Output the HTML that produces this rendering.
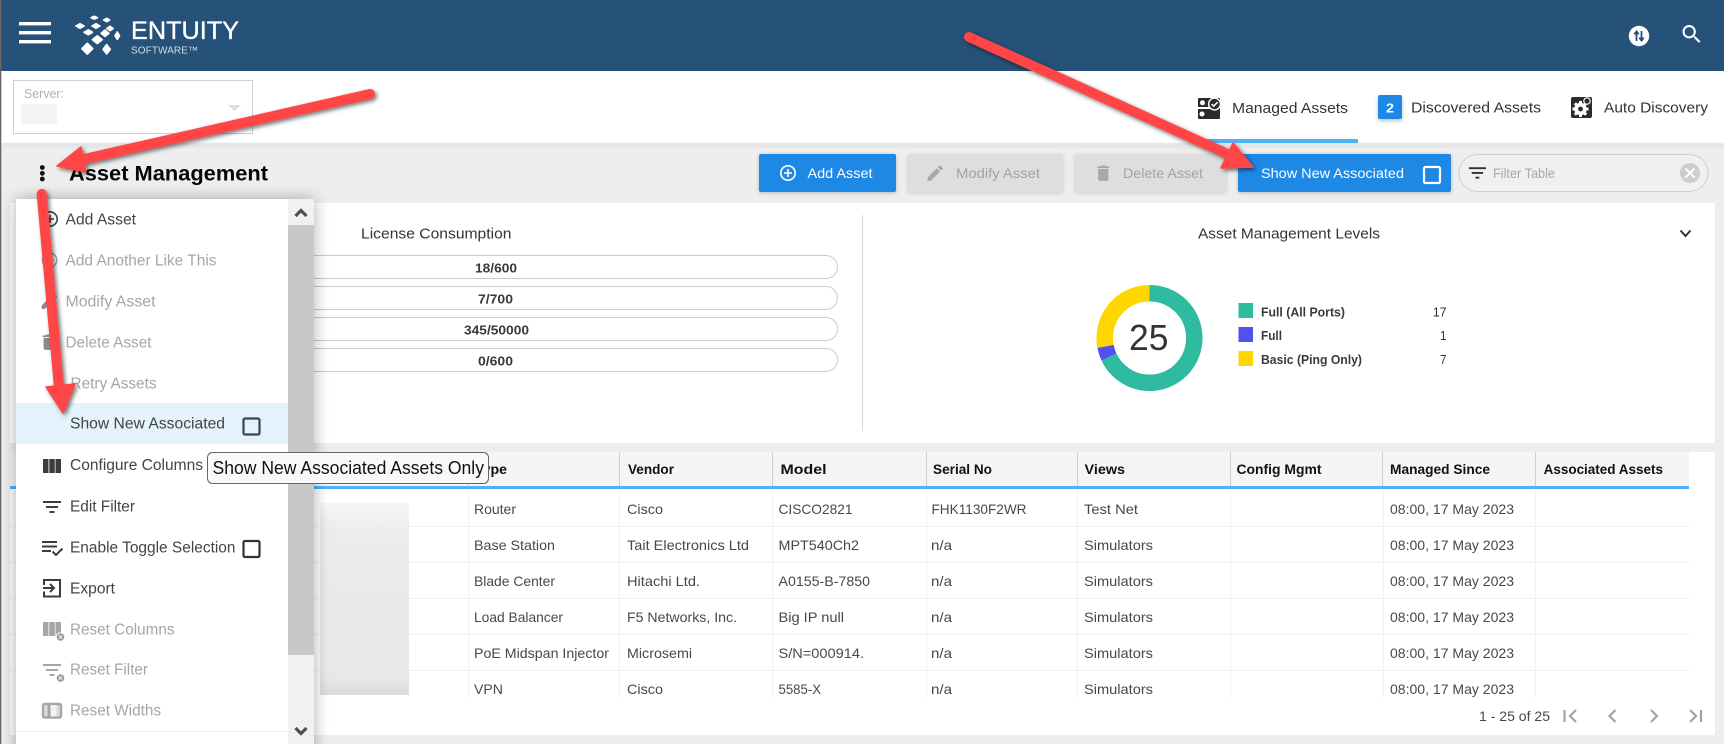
<!DOCTYPE html>
<html><head><meta charset="utf-8"><title>Asset Management</title>
<style>
html,body{margin:0;padding:0;background:#eee;width:1724px;height:744px;overflow:hidden}
svg{display:block}
text{font-family:"Liberation Sans",sans-serif;white-space:pre}
.m{font-size:15.5px;fill:#444}
.g{font-size:15.5px;fill:#a6a6a6}
.h{font-size:14px;font-weight:bold;fill:#111}
.c{font-size:14px;fill:#484848}
.t{font-size:15px;fill:#333}
.b{font-size:14px;fill:#fff}
.d{font-size:14px;fill:#a3a3a3}
.l{font-size:13px;font-weight:bold;fill:#3a3a3a}
.p{font-size:13px;font-weight:bold;fill:#3a3a3a}
</style></head><body>
<svg xmlns="http://www.w3.org/2000/svg" width="1724" height="744" viewBox="0 0 1724 744">
<defs>
<filter id="s8" x="-20%" y="-20%" width="140%" height="140%"><feGaussianBlur stdDeviation="8"/></filter>
<filter id="s2" x="-20%" y="-50%" width="140%" height="200%"><feGaussianBlur stdDeviation="2"/></filter>
<filter id="as" x="-20%" y="-20%" width="140%" height="140%"><feDropShadow dx="2" dy="2" stdDeviation="2" flood-color="#000" flood-opacity=".55"/></filter>
<linearGradient id="blk" x1="0" y1="0" x2="0" y2="1"><stop offset="0" stop-color="#f7f7f7"/><stop offset=".14" stop-color="#ececec"/><stop offset=".5" stop-color="#e9e9e9"/><stop offset=".9" stop-color="#e8e8e8"/><stop offset="1" stop-color="#dcdcdc"/></linearGradient>
</defs>
<rect width="1724" height="744" fill="#eeeeee"/>
<rect y="71" width="1724" height="72" fill="#fff"/>
<rect y="143" width="1724" height="4" fill="#000" opacity=".05" filter="url(#s2)"/>

<!-- Header -->
<rect width="1724" height="71" fill="#265178"/>
<g fill="#fff">
<rect x="19" y="22" width="32" height="3.4"/><rect x="19" y="31" width="32" height="3.4"/><rect x="19" y="40" width="32" height="3.4"/>
</g>
<g fill="#fff" stroke="#fff" stroke-width="1.5" stroke-linejoin="round">
<polygon points="81.8,48.7 87.3,43.2 92.8,48.7 87.3,54.2"/>
<polygon points="103,49.3 106.7,44.5 110.4,49.3 106.7,54.1"/>
<polygon points="92.3,39.7 97.3,35.7 102.3,39.7 97.3,43.7"/>
<polygon points="84,32.3 88.3,29.8 92.6,32.3 88.3,34.8"/>
<polygon points="101,33.3 105,30 109,33.3 105,36.6"/>
<polygon points="92,26 96,23.7 100,26 96,28.3"/>
<polygon points="75.8,26 80,23.7 84.2,26 80,28.3"/>
<polygon points="106.7,28.5 110,26.2 113.3,28.5 110,30.8"/>
<polygon points="115,35.7 117.3,31.9 119.6,35.7 117.3,39.5"/>
<polygon points="91,17.7 94.3,16.2 97.6,17.7 94.3,19.2"/>
<polygon points="103.6,20 106.7,18.2 109.8,20 106.7,21.8"/>
</g>
<text x="131" y="39" font-size="25" fill="#fff" stroke="#fff" stroke-width=".35" textLength="108" lengthAdjust="spacingAndGlyphs">ENTUITY</text>
<text x="131" y="53.500" font-size="10" fill="#d5dde5" textLength="67">SOFTWARE™</text>
<circle cx="1639" cy="36" r="10.2" fill="#fff"/>
<path d="M1636.500 41v-9M1634.300 34.300l2.200-2.800 2.200 2.800M1641.500 31v9M1639.300 37.700l2.200 2.800 2.200-2.800" stroke="#265178" stroke-width="1.800" fill="none"/>
<path transform="translate(1679.500 22) scale(1.02)" fill="#fff" d="M15.5 14h-.79l-.28-.27C15.41 12.59 16 11.11 16 9.5 16 5.91 13.09 3 9.5 3S3 5.91 3 9.5 5.91 16 9.5 16c1.61 0 3.09-.59 4.23-1.57l.27.28v.79l5 4.99L20.49 19l-4.99-5zm-6 0C7.01 14 5 11.99 5 9.5S7.01 5 9.5 5 14 7.01 14 9.5 11.99 14 9.5 14z"/>

<!-- Server -->
<rect x="13.5" y="80.5" width="239" height="53" fill="#fff" stroke="#cfcfcf"/>
<text x="24" y="98" font-size="13" fill="#b0b0b0" textLength="40" lengthAdjust="spacingAndGlyphs">Server:</text>
<rect x="21" y="104" width="36" height="20" fill="#f3f3f3"/>
<polygon points="228,105 241,105 234.5,111" fill="#dedede"/>

<!-- Tabs -->
<rect x="1198" y="98" width="22" height="21" rx="1" fill="#2b2b2b"/>
<rect x="1198" y="107" width="13" height="2" fill="#fff"/>
<circle cx="1202.5" cy="102.8" r="2.5" fill="#fff"/><circle cx="1202" cy="114" r="2.5" fill="#fff"/>
<circle cx="1214.5" cy="104" r="6.6" fill="#fff"/><circle cx="1214.5" cy="104" r="5.2" fill="#2b2b2b"/>
<path d="M1211.6 104l2.1 2.2 3.9-4" stroke="#fff" stroke-width="1.5" fill="none"/>
<text x="1232" y="113" class="t" textLength="116" lengthAdjust="spacingAndGlyphs">Managed Assets</text>
<rect x="1198" y="139" width="160" height="4" fill="#4db2f7"/>
<rect x="1378" y="97" width="24" height="24" rx="2" fill="#000" opacity=".25" filter="url(#s2)"/>
<rect x="1378" y="95" width="24" height="24" rx="2" fill="#1e88e5"/>
<text x="1386" y="112.5" font-size="13" font-weight="bold" fill="#fff" textLength="8" lengthAdjust="spacingAndGlyphs">2</text>
<text x="1411" y="112.500" class="t" textLength="130" lengthAdjust="spacingAndGlyphs">Discovered Assets</text>
<rect x="1571" y="97" width="21" height="21" rx="2" fill="#2b2b2b"/>
<g transform="translate(1580.5 109)"><circle r="6.2" fill="#fff"/><path d="M-1.5-8h3v16h-3zM-8-1.5h16v3h-16z" fill="#fff"/><path d="M-1.5-8h3v16h-3z" fill="#fff" transform="rotate(45)"/><path d="M-1.5-8h3v16h-3z" fill="#fff" transform="rotate(-45)"/><circle r="2.4" fill="#2b2b2b"/></g>
<circle cx="1587" cy="101" r="3.2" fill="#2b2b2b" stroke="#fff" stroke-width="1.2"/>
<text x="1604" y="112.500" class="t" textLength="104" lengthAdjust="spacingAndGlyphs">Auto Discovery</text>

<!-- Toolbar -->
<circle cx="42.3" cy="167.500" r="2.400" fill="#111"/><circle cx="42.3" cy="173.300" r="2.400" fill="#111"/><circle cx="42.3" cy="179" r="2.400" fill="#111"/>
<text x="69" y="180.500" font-size="21.5" font-weight="bold" fill="#050505" textLength="199" lengthAdjust="spacingAndGlyphs">Asset Management</text>
<rect x="759" y="155" width="137" height="38" rx="2" fill="#000" opacity=".22" filter="url(#s2)"/>
<rect x="759" y="154" width="137" height="38" rx="2" fill="#1e88e5"/>
<rect x="908" y="155" width="155" height="38" rx="2" fill="#000" opacity=".15" filter="url(#s2)"/>
<rect x="908" y="154" width="155" height="38" rx="2" fill="#dedede"/>
<rect x="1075" y="155" width="151.500" height="38" rx="2" fill="#000" opacity=".15" filter="url(#s2)"/>
<rect x="1075" y="154" width="151.500" height="38" rx="2" fill="#dedede"/>
<rect x="1238" y="155" width="213" height="38" rx="2" fill="#000" opacity=".22" filter="url(#s2)"/>
<rect x="1238" y="154" width="213" height="38" rx="2" fill="#1e88e5"/>
<path transform="translate(778.4 163.400) scale(.8)" fill="#fff" d="M13 7h-2v4H7v2h4v4h2v-4h4v-2h-4V7zm-1-5C6.48 2 2 6.48 2 12s4.48 10 10 10 10-4.48 10-10S17.52 2 12 2zm0 18c-4.41 0-8-3.59-8-8s3.59-8 8-8 8 3.59 8 8-3.59 8-8 8z"/>
<text x="807.500" y="178" class="b" textLength="65" lengthAdjust="spacingAndGlyphs">Add Asset</text>
<path transform="translate(925 163) scale(.85)" fill="#a8a8a8" d="M3 17.25V21h3.75L17.81 9.94l-3.75-3.75L3 17.25zM20.71 7.04c.39-.39.39-1.02 0-1.41l-2.34-2.34c-.39-.39-1.02-.39-1.41 0l-1.83 1.83 3.75 3.75 1.83-1.83z"/>
<text x="956" y="178" class="d" textLength="84" lengthAdjust="spacingAndGlyphs">Modify Asset</text>
<path transform="translate(1093 163) scale(.85)" fill="#a8a8a8" d="M6 19c0 1.1.9 2 2 2h8c1.1 0 2-.9 2-2V7H6v12zM19 4h-3.500l-1-1h-5l-1 1H5v2h14V4z"/>
<text x="1123" y="178" class="d" textLength="80" lengthAdjust="spacingAndGlyphs">Delete Asset</text>
<text x="1261" y="178" class="b" textLength="143" lengthAdjust="spacingAndGlyphs">Show New Associated</text>
<rect x="1424" y="167" width="16" height="16" rx="1.500" fill="none" stroke="#fff" stroke-width="2.200"/>
<rect x="1459" y="154.500" width="249" height="37" rx="18.500" fill="#f0f0f0" stroke="#cfcfcf"/>
<path transform="translate(1466 161.500) scale(.95)" fill="#333" d="M10 18h4v-2h-4v2zM3 6v2h18V6H3zm3 7h12v-2H6v2z"/>
<text x="1493" y="178" font-size="14" fill="#a8a8a8" textLength="62" lengthAdjust="spacingAndGlyphs">Filter Table</text>
<circle cx="1690" cy="173" r="10" fill="#cdcdcd"/>
<path d="M1685.500 168.500l9 9M1694.500 168.500l-9 9" stroke="#fff" stroke-width="2"/>

<!-- Top panel -->
<rect x="10" y="203" width="1705" height="240" fill="#fff"/>
<text x="361" y="238.500" class="t" textLength="150.500" lengthAdjust="spacingAndGlyphs">License Consumption</text>
<g fill="#fff" stroke="#cbcbcb">
<rect x="160.500" y="255.500" width="677" height="23" rx="11.500"/>
<rect x="160.500" y="286.500" width="677" height="23" rx="11.500"/>
<rect x="160.500" y="317.500" width="677" height="23" rx="11.500"/>
<rect x="160.500" y="348.500" width="677" height="23" rx="11.500"/>
</g>
<text x="475" y="272.500" class="p" textLength="42" lengthAdjust="spacingAndGlyphs">18/600</text>
<text x="478" y="303.500" class="p" textLength="35" lengthAdjust="spacingAndGlyphs">7/700</text>
<text x="464" y="334.500" class="p" textLength="65" lengthAdjust="spacingAndGlyphs">345/50000</text>
<text x="478" y="365.500" class="p" textLength="35" lengthAdjust="spacingAndGlyphs">0/600</text>
<rect x="862" y="215" width="1" height="216" fill="#d6d6d6"/>
<text x="1198" y="238.500" class="t" textLength="182" lengthAdjust="spacingAndGlyphs">Asset Management Levels</text>
<path d="M1680.500 230.500l5 5.500 5-5.500" fill="none" stroke="#333" stroke-width="2"/>
<g fill="none" stroke-width="16.500" transform="rotate(-90 1149.500 338)">
<circle cx="1149.500" cy="338" r="44.800" stroke="#2fbb9f" pathLength="360" stroke-dasharray="244.800 360"/>
<circle cx="1149.500" cy="338" r="44.800" stroke="#5450f0" pathLength="360" stroke-dasharray="14.400 360" stroke-dashoffset="-244.800"/>
<circle cx="1149.500" cy="338" r="44.800" stroke="#ffd600" pathLength="360" stroke-dasharray="100.800 360" stroke-dashoffset="-259.200"/>
</g>
<text x="1129" y="350" font-size="36" fill="#333" textLength="39.500" lengthAdjust="spacingAndGlyphs">25</text>
<rect x="1238.500" y="303" width="14.500" height="15" fill="#2fbb9f"/>
<rect x="1238.500" y="327" width="14.500" height="15" fill="#5450f0"/>
<rect x="1238.500" y="351" width="14.500" height="15" fill="#ffd600"/>
<text x="1261" y="316.500" class="l" textLength="84" lengthAdjust="spacingAndGlyphs">Full (All Ports)</text>
<text x="1261" y="340" class="l" textLength="21" lengthAdjust="spacingAndGlyphs">Full</text>
<text x="1261" y="364" class="l" textLength="101" lengthAdjust="spacingAndGlyphs">Basic (Ping Only)</text>
<text x="1432.700" y="316.500" font-size="13" fill="#333" textLength="14" lengthAdjust="spacingAndGlyphs">17</text>
<text x="1440" y="340" font-size="13" fill="#333" textLength="6.500" lengthAdjust="spacingAndGlyphs">1</text>
<text x="1440" y="364" font-size="13" fill="#333" textLength="6.500" lengthAdjust="spacingAndGlyphs">7</text>

<!-- Table -->
<rect x="10" y="452" width="1705" height="283" fill="#fff"/>
<rect x="10" y="452" width="1679" height="34" fill="#f5f5f5"/>
<rect x="10" y="486" width="1679" height="3" fill="#4db2f7"/>
<g fill="#cfcfcf">
<rect x="467" y="452" width="1" height="34"/><rect x="619" y="452" width="1" height="34"/><rect x="772" y="452" width="1" height="34"/><rect x="926" y="452" width="1" height="34"/><rect x="1077" y="452" width="1" height="34"/><rect x="1230" y="452" width="1" height="34"/><rect x="1382" y="452" width="1" height="34"/><rect x="1535" y="452" width="1" height="34"/>
</g>
<g fill="#f1f1f1">
<rect x="468" y="491" width="1" height="206"/><rect x="619" y="491" width="1" height="206"/><rect x="772" y="491" width="1" height="206"/><rect x="926" y="491" width="1" height="206"/><rect x="1077" y="491" width="1" height="206"/><rect x="1230" y="491" width="1" height="206"/><rect x="1383" y="491" width="1" height="206"/><rect x="1535" y="491" width="1" height="206"/>
<rect x="10" y="526" width="1679" height="1"/><rect x="10" y="562" width="1679" height="1"/><rect x="10" y="598" width="1679" height="1"/><rect x="10" y="634" width="1679" height="1"/><rect x="10" y="670" width="1679" height="1"/>
</g>
<rect x="320" y="503" width="89" height="192" fill="url(#blk)"/>
<text x="475" y="474" class="h" textLength="32" lengthAdjust="spacingAndGlyphs">Type</text>
<text x="628" y="474" class="h" textLength="46" lengthAdjust="spacingAndGlyphs">Vendor</text>
<text x="780.500" y="474" class="h" textLength="46" lengthAdjust="spacingAndGlyphs">Model</text>
<text x="933" y="474" class="h" textLength="59" lengthAdjust="spacingAndGlyphs">Serial No</text>
<text x="1084.500" y="474" class="h" textLength="40.500" lengthAdjust="spacingAndGlyphs">Views</text>
<text x="1236.500" y="474" class="h" textLength="85" lengthAdjust="spacingAndGlyphs">Config Mgmt</text>
<text x="1390" y="474" class="h" textLength="100" lengthAdjust="spacingAndGlyphs">Managed Since</text>
<text x="1543.600" y="474" class="h" textLength="119.400" lengthAdjust="spacingAndGlyphs">Associated Assets</text>

<text x="474" y="514" class="c" textLength="42" lengthAdjust="spacingAndGlyphs">Router</text>
<text x="627" y="514" class="c" textLength="36" lengthAdjust="spacingAndGlyphs">Cisco</text>
<text x="778.500" y="514" class="c" textLength="74" lengthAdjust="spacingAndGlyphs">CISCO2821</text>
<text x="931.500" y="514" class="c" textLength="95" lengthAdjust="spacingAndGlyphs">FHK1130F2WR</text>
<text x="1084" y="514" class="c" textLength="54" lengthAdjust="spacingAndGlyphs">Test Net</text>
<text x="1390" y="514" class="c" textLength="124" lengthAdjust="spacingAndGlyphs">08:00, 17 May 2023</text>

<text x="474" y="550" class="c" textLength="81" lengthAdjust="spacingAndGlyphs">Base Station</text>
<text x="627" y="550" class="c" textLength="122" lengthAdjust="spacingAndGlyphs">Tait Electronics Ltd</text>
<text x="778.500" y="550" class="c" textLength="80.500" lengthAdjust="spacingAndGlyphs">MPT540Ch2</text>
<text x="931" y="550" class="c" textLength="21" lengthAdjust="spacingAndGlyphs">n/a</text>
<text x="1084" y="550" class="c" textLength="69" lengthAdjust="spacingAndGlyphs">Simulators</text>
<text x="1390" y="550" class="c" textLength="124" lengthAdjust="spacingAndGlyphs">08:00, 17 May 2023</text>

<text x="474" y="586" class="c" textLength="81" lengthAdjust="spacingAndGlyphs">Blade Center</text>
<text x="627" y="586" class="c" textLength="73" lengthAdjust="spacingAndGlyphs">Hitachi Ltd.</text>
<text x="778.500" y="586" class="c" textLength="91.500" lengthAdjust="spacingAndGlyphs">A0155-B-7850</text>
<text x="931" y="586" class="c" textLength="21" lengthAdjust="spacingAndGlyphs">n/a</text>
<text x="1084" y="586" class="c" textLength="69" lengthAdjust="spacingAndGlyphs">Simulators</text>
<text x="1390" y="586" class="c" textLength="124" lengthAdjust="spacingAndGlyphs">08:00, 17 May 2023</text>

<text x="474" y="622" class="c" textLength="89" lengthAdjust="spacingAndGlyphs">Load Balancer</text>
<text x="627" y="622" class="c" textLength="110" lengthAdjust="spacingAndGlyphs">F5 Networks, Inc.</text>
<text x="778.500" y="622" class="c" textLength="65.500" lengthAdjust="spacingAndGlyphs">Big IP null</text>
<text x="931" y="622" class="c" textLength="21" lengthAdjust="spacingAndGlyphs">n/a</text>
<text x="1084" y="622" class="c" textLength="69" lengthAdjust="spacingAndGlyphs">Simulators</text>
<text x="1390" y="622" class="c" textLength="124" lengthAdjust="spacingAndGlyphs">08:00, 17 May 2023</text>

<text x="474" y="658" class="c" textLength="135" lengthAdjust="spacingAndGlyphs">PoE Midspan Injector</text>
<text x="627" y="658" class="c" textLength="65" lengthAdjust="spacingAndGlyphs">Microsemi</text>
<text x="778.500" y="658" class="c" textLength="85.500" lengthAdjust="spacingAndGlyphs">S/N=000914.</text>
<text x="931" y="658" class="c" textLength="21" lengthAdjust="spacingAndGlyphs">n/a</text>
<text x="1084" y="658" class="c" textLength="69" lengthAdjust="spacingAndGlyphs">Simulators</text>
<text x="1390" y="658" class="c" textLength="124" lengthAdjust="spacingAndGlyphs">08:00, 17 May 2023</text>

<text x="474" y="694" class="c" textLength="29" lengthAdjust="spacingAndGlyphs">VPN</text>
<text x="627" y="694" class="c" textLength="36" lengthAdjust="spacingAndGlyphs">Cisco</text>
<text x="778.500" y="694" class="c" textLength="42.500" lengthAdjust="spacingAndGlyphs">5585-X</text>
<text x="931" y="694" class="c" textLength="21" lengthAdjust="spacingAndGlyphs">n/a</text>
<text x="1084" y="694" class="c" textLength="69" lengthAdjust="spacingAndGlyphs">Simulators</text>
<text x="1390" y="694" class="c" textLength="124" lengthAdjust="spacingAndGlyphs">08:00, 17 May 2023</text>
<rect x="410" y="697" width="1290" height="38" fill="#fff"/>

<text x="1479" y="721" font-size="14" fill="#484848" textLength="71" lengthAdjust="spacingAndGlyphs">1 - 25 of 25</text>
<g fill="none" stroke="#a3a3a3" stroke-width="2.200">
<path d="M1564.500 710v12M1576 710l-6 6 6 6"/>
<path d="M1615.500 710l-6 6 6 6"/>
<path d="M1651 710l6 6-6 6"/>
<path d="M1690 710l6 6-6 6M1701 710v12"/>
</g>

<!-- Menu -->
<rect x="16" y="199" width="298" height="560" fill="#000" opacity=".32" filter="url(#s8)"/>
<rect x="16" y="199" width="272" height="545" fill="#fff"/>
<rect x="288" y="199" width="26" height="545" fill="#f1f1f1"/>
<rect x="288" y="225" width="26" height="430" fill="#c8c8c8"/>
<path d="M295.500 216l5.500-5.500 5.500 5.500" fill="none" stroke="#505050" stroke-width="3.200"/>
<path d="M295.500 728l5.500 5.500 5.500-5.500" fill="none" stroke="#505050" stroke-width="3.200"/>
<rect x="16" y="403" width="272" height="41" fill="#e3f2fb"/>
<rect x="16" y="731" width="272" height="1" fill="#ececec"/>

<path transform="translate(40.400 209.400) scale(.8)" fill="#444" d="M13 7h-2v4H7v2h4v4h2v-4h4v-2h-4V7zm-1-5C6.48 2 2 6.48 2 12s4.48 10 10 10 10-4.48 10-10S17.52 2 12 2zm0 18c-4.41 0-8-3.59-8-8s3.59-8 8-8 8 3.59 8 8-3.59 8-8 8z"/>
<text x="65.500" y="224.500" class="m" textLength="70.500" lengthAdjust="spacingAndGlyphs">Add Asset</text>
<path transform="translate(40 250.500) scale(.8)" fill="#a6a6a6" d="M13 7h-2v4H7v2h4v4h2v-4h4v-2h-4V7zm-1-5C6.48 2 2 6.48 2 12s4.48 10 10 10 10-4.48 10-10S17.52 2 12 2zm0 18c-4.41 0-8-3.59-8-8s3.59-8 8-8 8 3.59 8 8-3.59 8-8 8z"/>
<text x="65.500" y="265.500" class="g" textLength="151" lengthAdjust="spacingAndGlyphs">Add Another Like This</text>
<path transform="translate(39 291) scale(.85)" fill="#8a8a8a" d="M3 17.25V21h3.750L17.810 9.940l-3.750-3.750L3 17.250zM20.710 7.040c.39-.39.39-1.020 0-1.410l-2.340-2.340c-.39-.39-1.020-.39-1.410 0l-1.830 1.830 3.750 3.750 1.830-1.830z"/>
<text x="65.500" y="306.500" class="g" textLength="90" lengthAdjust="spacingAndGlyphs">Modify Asset</text>
<path transform="translate(38.500 332) scale(.85)" fill="#8a8a8a" d="M6 19c0 1.100.9 2 2 2h8c1.100 0 2-.9 2-2V7H6v12zM19 4h-3.500l-1-1h-5l-1 1H5v2h14V4z"/>
<text x="65.500" y="347.500" class="g" textLength="86" lengthAdjust="spacingAndGlyphs">Delete Asset</text>
<text x="70.500" y="388.500" class="g" textLength="86" lengthAdjust="spacingAndGlyphs">Retry Assets</text>
<text x="70" y="428.500" class="m" textLength="155" lengthAdjust="spacingAndGlyphs">Show New Associated</text>
<rect x="243.500" y="418.500" width="16" height="16" rx="1.500" fill="none" stroke="#37474f" stroke-width="2.200"/>

<g fill="#3c3c3c"><rect x="43" y="459" width="5.500" height="14"/><rect x="49.300" y="459" width="5.500" height="14"/><rect x="55.500" y="459" width="5.500" height="14"/></g>
<text x="70" y="470" class="m" textLength="133" lengthAdjust="spacingAndGlyphs">Configure Columns</text>
<g fill="#3c3c3c"><rect x="43" y="501" width="18" height="2"/><rect x="46" y="506" width="12" height="2"/><rect x="49.500" y="511" width="5" height="2"/></g>
<text x="70" y="511.500" class="m" textLength="65" lengthAdjust="spacingAndGlyphs">Edit Filter</text>
<g fill="#3c3c3c"><rect x="42" y="541" width="15" height="2"/><rect x="42" y="545.500" width="15" height="2"/><rect x="42" y="550" width="9" height="2"/></g>
<path d="M52.500 551.500l3.500 3.500 6.500-6.500" fill="none" stroke="#3c3c3c" stroke-width="2"/>
<text x="70" y="552.500" class="m" textLength="165.500" lengthAdjust="spacingAndGlyphs">Enable Toggle Selection</text>
<rect x="243.500" y="541" width="16" height="16" rx="1.500" fill="none" stroke="#333" stroke-width="2.200"/>
<path d="M44 585v-5h16v16.500h-16v-5M43 588h11M50 584l4 4-4 4" fill="none" stroke="#3c3c3c" stroke-width="2"/>
<text x="70" y="593.500" class="m" textLength="45" lengthAdjust="spacingAndGlyphs">Export</text>
<g fill="#a6a6a6"><rect x="43" y="622" width="5.500" height="14"/><rect x="49.300" y="622" width="5.500" height="14"/><rect x="55.500" y="622" width="5.500" height="14"/></g>
<circle cx="60.500" cy="637" r="4.800" fill="#fff"/><circle cx="60.500" cy="637" r="3.800" fill="#999"/>
<path d="M58.700 635.200l3.600 3.600M62.300 635.200l-3.600 3.600" stroke="#fff" stroke-width=".8"/>
<text x="70" y="634.500" class="g" textLength="104.500" lengthAdjust="spacingAndGlyphs">Reset Columns</text>
<g fill="#a6a6a6"><rect x="43" y="664" width="18" height="2"/><rect x="46" y="669" width="12" height="2"/><rect x="49.500" y="674" width="5" height="2"/></g>
<circle cx="60.500" cy="678" r="4.800" fill="#fff"/><circle cx="60.500" cy="678" r="3.800" fill="#999"/>
<path d="M58.700 676.200l3.600 3.600M62.300 676.200l-3.600 3.600" stroke="#fff" stroke-width=".8"/>
<text x="70" y="674.500" class="g" textLength="78" lengthAdjust="spacingAndGlyphs">Reset Filter</text>
<rect x="43" y="704" width="18" height="13.500" rx="1.500" fill="#dcdcdc" stroke="#a6a6a6" stroke-width="2.400"/>
<rect x="47.500" y="704" width="3" height="13.500" fill="#a6a6a6"/><rect x="50.500" y="705" width="6" height="11.500" fill="#f2f2f2"/>
<text x="70" y="715.500" class="g" textLength="91" lengthAdjust="spacingAndGlyphs">Reset Widths</text>

<!-- Tooltip -->
<rect x="207.500" y="452.500" width="281" height="31" rx="5" fill="#f9f9fb" stroke="#666"/>
<text x="212.500" y="474" font-size="18" fill="#111" textLength="271.500" lengthAdjust="spacingAndGlyphs">Show New Associated Assets Only</text>

<!-- Left frame edge -->
<rect x="0" y="0" width="1.300" height="744" fill="#666"/>

<!-- Arrows -->
<g filter="url(#as)" fill="#ff4545" stroke="#ff4545" stroke-linejoin="round">
<line x1="370" y1="94" x2="80" y2="160" stroke-width="10" stroke-linecap="round"/>
<polygon points="57,166 81,147 86,172" stroke-width="1.500"/>
<line x1="969" y1="37" x2="1232" y2="156" stroke-width="10" stroke-linecap="round"/>
<polygon points="1253,167 1233,143 1221,168" stroke-width="1.500"/>
<line x1="41.700" y1="194" x2="59" y2="388" stroke-width="10" stroke-linecap="round"/>
<polygon points="63,413 46,387 75,384" stroke-width="1.500"/>
</g>
</svg>
</body></html>
